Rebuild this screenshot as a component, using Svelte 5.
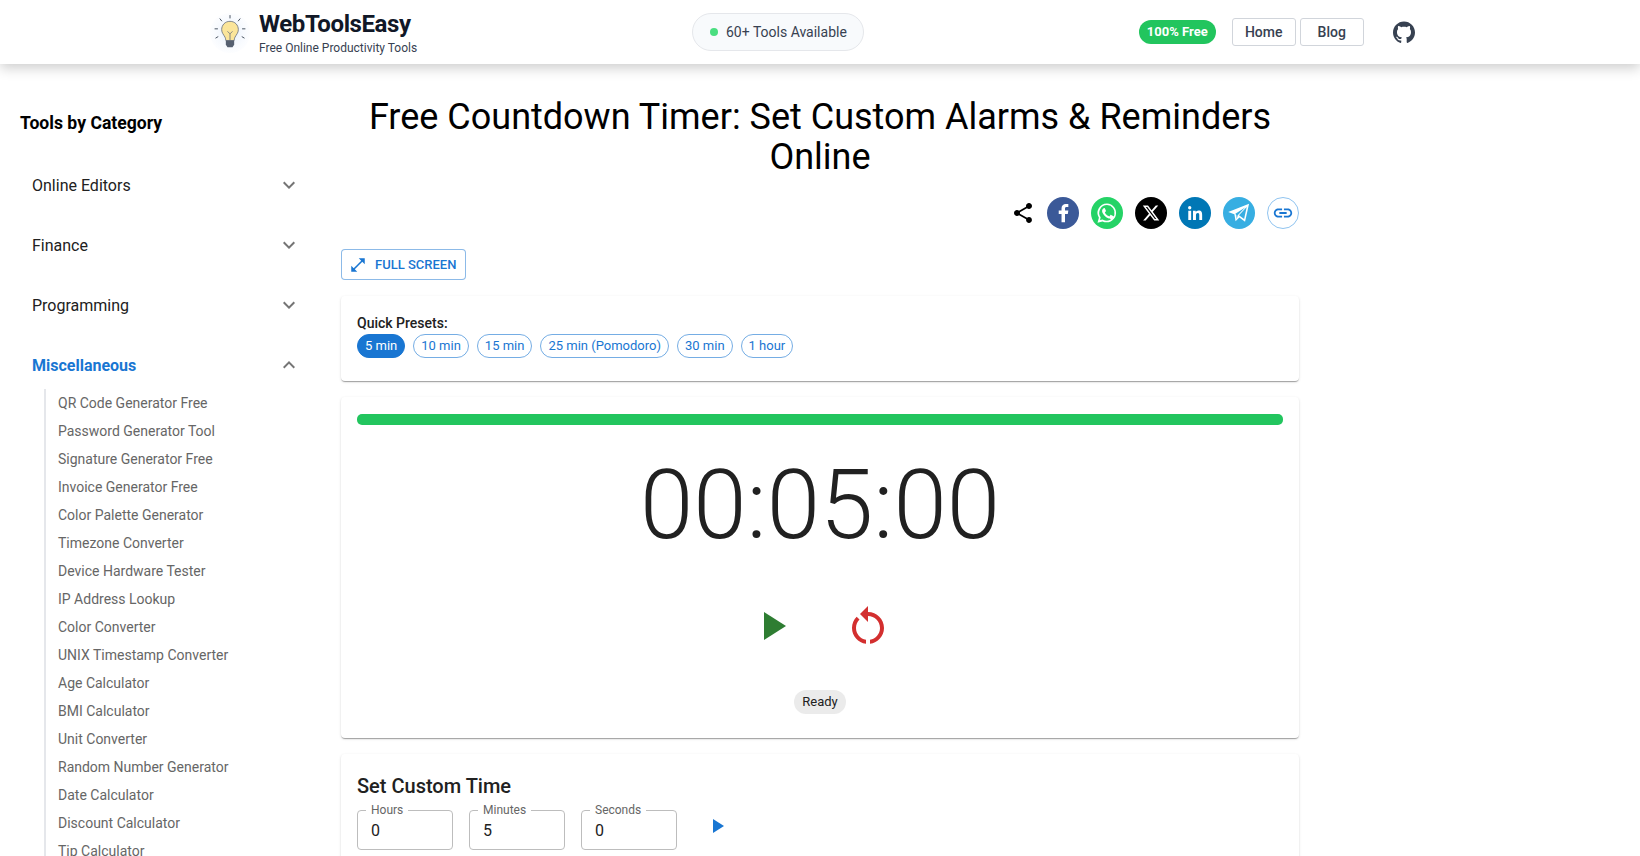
<script>
  const top = ['Online Editors', 'Finance', 'Programming'];
  const subs = ['QR Code Generator Free','Password Generator Tool','Signature Generator Free','Invoice Generator Free','Color Palette Generator','Timezone Converter','Device Hardware Tester','IP Address Lookup','Color Converter','UNIX Timestamp Converter','Age Calculator','BMI Calculator','Unit Converter','Random Number Generator','Date Calculator','Discount Calculator','Tip Calculator'];
  const presets = ['5 min','10 min','15 min','25 min (Pomodoro)','30 min','1 hour'];
  const fields = [['Hours','0'],['Minutes','5'],['Seconds','0']];
</script>

<header class="header">
  <div class="header-inner">
    <a class="brand" href="#home">
      <svg class="bulb" viewBox="0 0 48 48" aria-hidden="true">
        <defs><radialGradient id="halo"><stop offset="0" stop-color="#e3edfb"/><stop offset="1" stop-color="#f6f9fe" stop-opacity=".3"/></radialGradient></defs>
        <circle cx="24" cy="24" r="24" fill="url(#halo)"/>
        <g stroke="#4b5563" stroke-width="1.200" stroke-linecap="round">
          <path d="M24 3v3M12 7l2 2.500M36 7l-2 2.500M6 19h3M42 19h-3M7 30l2.500-1.500M41 30l-2.500-1.500"/>
        </g>
        <path d="M24 10c-6 0-10 4.500-10 10 0 4 2.500 6 4 9 .7 1.400.8 2.500 1 4h10c.2-1.500.3-2.600 1-4 1.500-3 4-5 4-9 0-5.500-4-10-10-10z" fill="#fbe59a" stroke="#6b7280" stroke-width="1"/>
        <path d="M21 22l3 3 3-3M24 25v8" fill="none" stroke="#6b7280" stroke-width="1"/>
        <path d="M19 33h10v5l-2 3h-6l-2-3z" fill="#566070"/>
      </svg>
      <span class="brand-text">
        <span class="brand-name">WebToolsEasy</span>
        <span class="brand-sub">Free Online Productivity Tools</span>
      </span>
    </a>
    <div class="avail"><i class="dot"></i>60+ Tools Available</div>
    <div class="right">
      <span class="free">100% Free</span>
      <div class="navs">
        <a class="nav" href="#home">Home</a>
        <a class="nav" href="#blog">Blog</a>
      </div>
      <svg class="gh" viewBox="0 0 24 24" aria-hidden="true"><path fill="#374151" d="M12 .5C5.370.5 0 5.870 0 12.500c0 5.300 3.438 9.800 8.205 11.385.6.110.82-.260.82-.577 0-.285-.010-1.040-.015-2.040-3.338.724-4.042-1.610-4.042-1.610-.546-1.385-1.333-1.755-1.333-1.755-1.089-.745.083-.729.083-.729 1.205.084 1.838 1.236 1.838 1.236 1.070 1.835 2.809 1.305 3.495.998.108-.776.417-1.305.760-1.605-2.665-.300-5.466-1.332-5.466-5.930 0-1.310.465-2.380 1.235-3.220-.135-.303-.540-1.523.105-3.176 0 0 1.005-.322 3.300 1.230.960-.267 1.980-.399 3-.405 1.020.006 2.040.138 3 .405 2.280-1.552 3.285-1.230 3.285-1.230.645 1.653.240 2.873.120 3.176.765.840 1.230 1.910 1.230 3.220 0 4.610-2.805 5.625-5.475 5.920.420.360.810 1.096.810 2.220 0 1.606-.015 2.896-.015 3.286 0 .315.210.690.825.570C20.565 22.292 24 17.800 24 12.500 24 5.870 18.630.5 12 .5z"/></svg>
    </div>
  </div>
</header>

<div class="page">
  <aside class="side">
    <h2 class="side-title">Tools by Category</h2>
    {#each top as t}
      <div class="cat"><span>{t}</span><svg class="chev" viewBox="0 0 24 24"><path d="M16.590 8.590 12 13.170 7.410 8.590 6 10l6 6 6-6z"/></svg></div>
    {/each}
    <div class="cat active"><span>Miscellaneous</span><svg class="chev" viewBox="0 0 24 24"><path d="m12 8-6 6 1.410 1.410L12 10.830l4.590 4.580L18 14z"/></svg></div>
    <ul class="subs">
      {#each subs as s}<li>{s}</li>{/each}
    </ul>
  </aside>

  <main class="main">
    <h1 class="title">Free Countdown Timer: Set Custom Alarms &amp; Reminders Online</h1>

    <div class="share">
      <svg class="share-ic" viewBox="0 0 24 24"><path d="M18 16.080c-.760 0-1.440.300-1.960.770L8.910 12.700c.050-.230.090-.460.090-.700s-.040-.470-.090-.700l7.050-4.110c.540.500 1.250.810 2.040.810 1.660 0 3-1.340 3-3s-1.340-3-3-3-3 1.340-3 3c0 .240.040.470.090.700L8.040 9.810C7.500 9.310 6.790 9 6 9c-1.660 0-3 1.340-3 3s1.340 3 3 3c.790 0 1.500-.310 2.040-.810l7.120 4.160c-.050.210-.080.430-.080.650 0 1.610 1.310 2.920 2.920 2.920 1.610 0 2.920-1.310 2.920-2.920s-1.310-2.920-2.920-2.920z"/></svg>
      <span class="soc fb"><svg viewBox="0 0 24 24"><path fill="#fff" d="M13.500 19v-6.300h2.100l.4-2.500h-2.500V8.700c0-.700.300-1.200 1.300-1.200H16V5.300c-.300 0-1-.100-1.900-.100-1.900 0-3.200 1.200-3.200 3.300v1.700H8.800v2.500h2.100V19z"/></svg></span>
      <span class="soc wa"><svg viewBox="-2 -2 28 28"><path fill="#fff" d="M12 3.600a8.300 8.300 0 0 0-7.100 12.600L3.700 20.500l4.400-1.100A8.300 8.300 0 1 0 12 3.600zm0 1.500a6.800 6.800 0 1 1-3.500 12.700l-.3-.2-2.400.6.700-2.300-.2-.3A6.800 6.800 0 0 1 12 5.100z"/><path fill="#fff" d="M9.300 7.900c-.200 0-.500.100-.700.300-.300.300-.900.900-.900 2.100s.900 2.400 1 2.600c.100.200 1.800 2.800 4.400 3.800 2.100.8 2.600.700 3 .600.500 0 1.500-.600 1.700-1.200.200-.600.200-1.100.100-1.200-.100-.100-.200-.200-.500-.300l-1.800-.9c-.200-.100-.400-.100-.600.100l-.8 1c-.100.200-.300.200-.500.100-.300-.100-1.100-.400-2.100-1.300-.800-.700-1.300-1.600-1.400-1.800-.100-.300 0-.400.100-.500l.4-.5c.100-.100.200-.300.300-.400.100-.200 0-.300 0-.500l-.8-1.900c-.200-.400-.400-.400-.600-.400z"/></svg></span>
      <span class="soc xx"><svg viewBox="-9 -9 42 42"><path fill="#fff" d="M18.244 2.250h3.308l-7.227 8.260 8.502 11.240H16.170l-5.214-6.817L4.990 21.750H1.680l7.730-8.835L1.254 2.250H8.080l4.713 6.231zm-1.161 17.520h1.833L7.084 4.126H5.117z"/></svg></span>
      <span class="soc li"><svg viewBox="-2.500 -3 30 30"><path fill="#fff" d="M6.200 9.800h2.700v8.700H6.200zM7.550 5.500a1.570 1.570 0 1 1 0 3.140 1.570 1.570 0 0 1 0-3.140zM10.600 9.800h2.600V11c.400-.700 1.300-1.400 2.700-1.400 2.800 0 3.300 1.800 3.300 4.200v4.700h-2.700v-4.200c0-1 0-2.300-1.400-2.300s-1.700 1.100-1.700 2.200v4.300h-2.800z"/></svg></span>
      <span class="soc tg"><svg viewBox="-1.500 -1.500 27 27"><path fill="#fff" fill-rule="evenodd" d="M20.500 4.300 2.900 11.200l5.200 1.900 1 5.900 3.200-3.200 4.800 3.500zM8.900 12.700l8.300-5.400-6.300 6.500-.8 3.300-.4-3.500zM18.500 6.900l-2.200 10.100-4.300-3.100z"/></svg></span>
      <span class="soc lk"><svg viewBox="0 0 24 24"><path fill="#1976d2" d="M3.900 12c0-1.710 1.390-3.100 3.100-3.100h4V7H7c-2.760 0-5 2.240-5 5s2.240 5 5 5h4v-1.900H7c-1.710 0-3.100-1.390-3.100-3.100zM8 13h8v-2H8v2zm9-6h-4v1.900h4c1.710 0 3.100 1.390 3.100 3.100s-1.390 3.100-3.100 3.100h-4V17h4c2.760 0 5-2.240 5-5s-2.240-5-5-5z"/></svg></span>
    </div>

    <div class="fs-row">
      <button class="fs"><svg viewBox="0 0 24 24"><path fill="#1976d2" d="M21 11V3h-8l3.290 3.290-10 10L3 13v8h8l-3.290-3.290 10-10z"/></svg>FULL SCREEN</button>
    </div>

    <section class="card presets">
      <div class="label">Quick Presets:</div>
      <div class="chips">
        {#each presets as p, i}<span class="chip" class:on={i === 0}>{p}</span>{/each}
      </div>
    </section>

    <section class="card timer">
      <div class="bar"></div>
      <div class="time">00:05:00</div>
      <div class="ctrl">
        <span class="ib"><svg viewBox="0 0 24 24"><path fill="#2e7d32" d="M8 5v14l11-7z"/></svg></span>
        <span class="ib"><svg viewBox="0 0 24 24"><path fill="#d32f2f" d="M12 5V2L8 6l4 4V7c3.310 0 6 2.690 6 6 0 2.970-2.170 5.430-5 5.910v2.020c3.950-.490 7-3.850 7-7.930 0-4.420-3.580-8-8-8zm-6 8c0-1.650.670-3.150 1.760-4.240L6.340 7.340C4.900 8.790 4 10.790 4 13c0 4.080 3.050 7.440 7 7.930v-2.020c-2.830-.480-5-2.940-5-5.910z"/></svg></span>
      </div>
      <div class="status"><span>Ready</span></div>
    </section>

    <section class="card custom">
      <h3>Set Custom Time</h3>
      <div class="fields">
        {#each fields as [l, v]}
          <fieldset class="field"><legend>{l}</legend><span>{v}</span></fieldset>
        {/each}
        <svg class="go" viewBox="0 0 24 24"><path fill="#1976d2" d="M8 5v14l11-7z"/></svg>
      </div>
    </section>
  </main>
</div>

<style>
  :global(html), :global(body) { margin: 0; height: 856px; overflow: hidden; background: #fff; }
  * { box-sizing: border-box; }
  .header, .page { font-family: Roboto, sans-serif; }
  a { text-decoration: none; color: inherit; }

  .header { height: 64px; background: #fff; box-shadow: 0 4px 12px rgba(0,0,0,.2); position: relative; z-index: 2; }
  .header-inner { width: 1216px; margin: 0 auto 0 210px; height: 100%; display: flex; align-items: center; }
  .brand { display: flex; align-items: center; gap: 9px; width: 482px; }
  .bulb { width: 40px; height: 40px; flex: none; margin-top: 2px; }
  .brand-text { display: flex; flex-direction: column; padding-top: 2px; }
  .brand-name { font-size: 24px; line-height: 30px; font-weight: 700; color: #111827; letter-spacing: -.4px; }
  .brand-sub { font-size: 12px; line-height: 18px; color: #374151; }
  .avail { display: flex; align-items: center; height: 38px; padding: 0 16px 0 17px; border: 1px solid #e5e7eb; border-radius: 19px; background: #f8fafc; font-size: 14px; color: #374151; }
  .dot { width: 8px; height: 8px; border-radius: 50%; background: #4ade80; margin-right: 8px; }
  .right { display: flex; align-items: center; margin-left: 275px; }
  .free { background: #22c55e; color: #fff; font-size: 13px; font-weight: 700; height: 24px; line-height: 24px; padding: 0 8px; border-radius: 12px; }
  .navs { display: flex; gap: 4px; margin-left: 16px; }
  .nav { width: 64px; height: 28px; line-height: 26px; text-align: center; border: 1px solid #d1d5db; border-radius: 3px; font-size: 14px; font-weight: 500; color: #374151; }
  .gh { width: 22px; height: 22px; margin-left: 29px; }

  .page { display: flex; height: 792px; overflow: hidden; }
  .side { width: 320px; flex: none; padding: 0 20px; }
  .side-title { margin: 47px 0 0; font-size: 17.600px; line-height: 24px; font-weight: 700; color: #000; height: 44px; }
  .cat { height: 60px; display: flex; align-items: center; justify-content: space-between; padding-left: 12px; font-size: 16px; color: #212121; }
  .chev { width: 24px; height: 24px; fill: #757575; margin-right: -1px; }
  .cat.active { color: #1976d2; font-weight: 700; height: 60px; }
  .subs { list-style: none; margin: -6px 0 0 24px; padding: 0 0 0 12px; border-left: 2px solid #e5e7eb; }
  .subs li { height: 28px; line-height: 28px; font-size: 14px; color: #666; }

  .main { width: 958px; flex: none; margin-left: 21px; }
  .title { margin: 33px 0 0; font-size: 36px; line-height: 40px; font-weight: 400; text-align: center; color: #000; }
  .share { display: flex; justify-content: flex-end; align-items: center; gap: 12px; margin-top: 20px; height: 32px; }
  .share-ic { width: 24px; height: 24px; }
  .soc { width: 32px; height: 32px; border-radius: 50%; display: block; }
  .soc svg { display: block; width: 100%; height: 100%; }
  .fb { background: #3b5998; } .wa { background: #25d366; } .xx { background: #000; } .li { background: #0077b5; } .tg { background: #37aee2; }
  .lk { border: 1px solid #90c4f0; }
  .soc.lk svg { width: 22px; height: 22px; margin: 4px; }
  .fs-row { margin-top: 20px; }
  .fs { display: inline-flex; align-items: center; gap: 8px; height: 31px; padding: 0 9px 0 7px; border: 1px solid rgba(25,118,210,.5); border-radius: 4px; background: #fff; color: #1976d2; font: 500 13px Roboto, sans-serif; }
  .fs svg { width: 18px; height: 18px; }

  .card { background: #fff; border-radius: 4px; box-shadow: 0 2px 1px -1px rgba(0,0,0,.2), 0 1px 1px 0 rgba(0,0,0,.14), 0 1px 3px 0 rgba(0,0,0,.12); padding: 16px; }
  .presets { margin-top: 16px; height: 85px; padding-top: 17px; }
  .label { font-size: 14px; font-weight: 500; line-height: 20px; color: #212121; }
  .chips { display: flex; gap: 8px; margin-top: 1px; }
  .chip { height: 24px; line-height: 22px; padding: 0 7px; border: 1px solid rgba(25,118,210,.6); border-radius: 12px; font-size: 13px; color: #1976d2; }
  .chip.on { background: #1976d2; color: #fff; border-color: #1976d2; }
  .timer { margin-top: 16px; height: 341px; padding-top: 17px; }
  .bar { height: 11px; border-radius: 5px; background: #22c55e; }
  .time { margin-top: 24px; text-align: center; font-size: 96px; line-height: 112px; font-weight: 300; color: #212121; }
  .ctrl { display: flex; justify-content: center; gap: 24px; margin-top: 29px; }
  .ib { display: block; padding: 12px; }
  .ib svg { display: block; width: 48px; height: 48px; }
  .status { text-align: center; margin-top: 28px; }
  .status span { display: inline-block; height: 24px; line-height: 24px; padding: 0 8px; border-radius: 12px; background: #ebebeb; font-size: 13px; color: #212121; }
  .custom { margin-top: 16px; height: 200px; padding-top: 18px; }
  .custom h3 { margin: 0; font-size: 20px; line-height: 28px; font-weight: 500; color: #212121; }
  .fields { display: flex; gap: 16px; align-items: flex-start; padding-top: 7px; }
  .field { width: 96px; height: 47px; margin: -4px 0 0; padding: 0 13px; border: 1px solid #bdbdbd; border-radius: 4px; font-size: 16px; line-height: 24px; color: #212121; }
  .field legend { padding: 0 5px; margin-left: -5px; font-size: 12px; line-height: 14px; color: #666; }
  .field span { display: block; margin-top: 2px; }
  .go { width: 24px; height: 24px; margin: 7px 0 0 12px; }
</style>
